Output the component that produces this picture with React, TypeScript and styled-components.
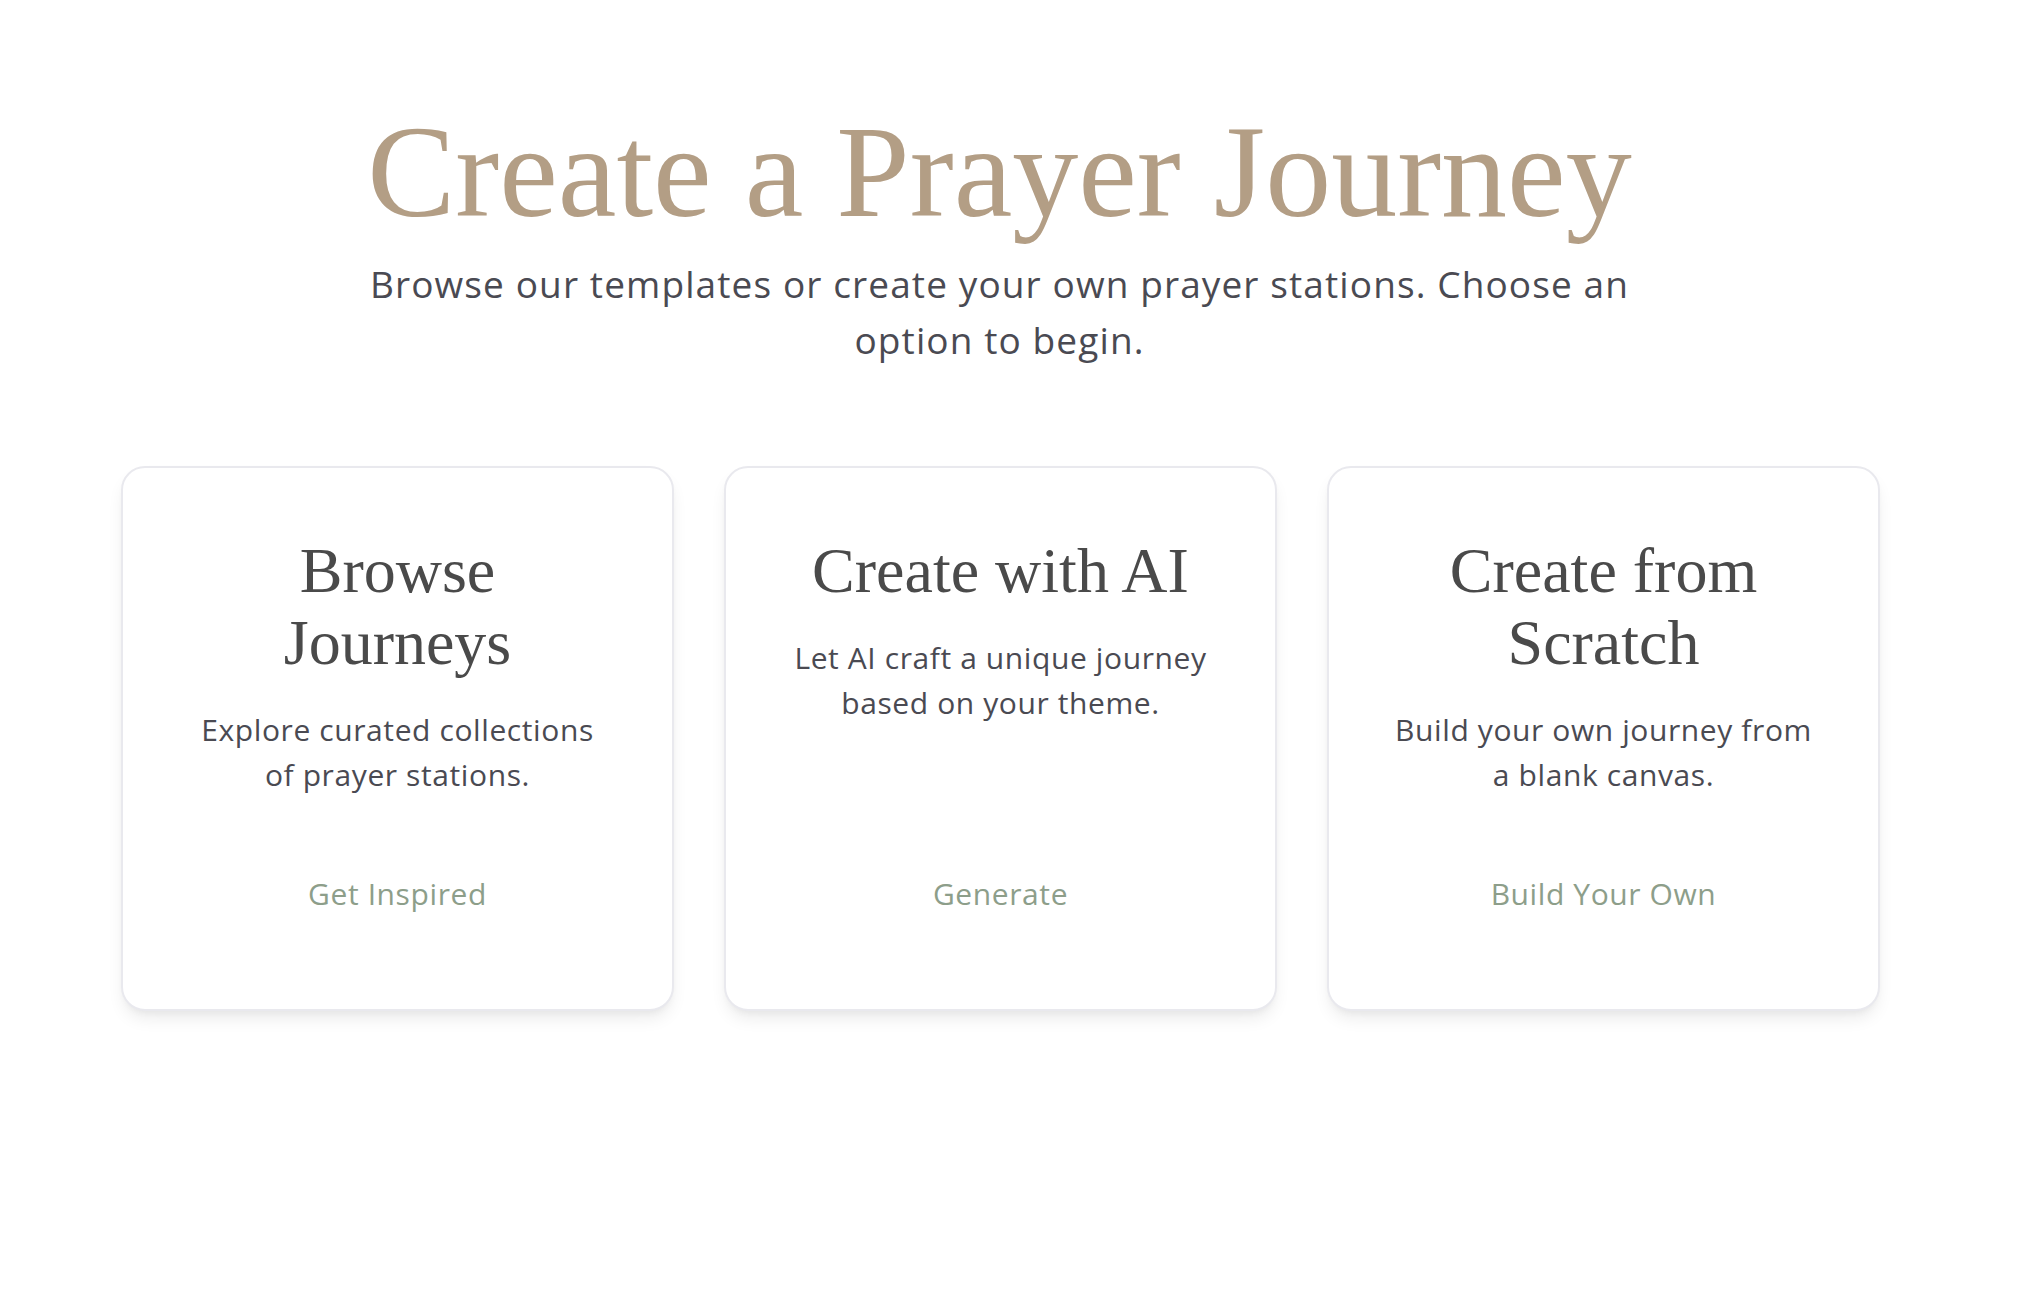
import styled, { createGlobalStyle } from 'styled-components';

interface OptionCardProps {
  id: string;
  title: string;
  description: string;
  action: string;
}

const OPTIONS: Array<OptionCardProps> = [
  {
    id: 'browse',
    title: 'Browse Journeys',
    description: 'Explore curated collections of prayer stations.',
    action: 'Get Inspired',
  },
  {
    id: 'ai',
    title: 'Create with AI',
    description: 'Let AI craft a unique journey based on your theme.',
    action: 'Generate',
  },
  {
    id: 'scratch',
    title: 'Create from Scratch',
    description: 'Build your own journey from a blank canvas.',
    action: 'Build Your Own',
  },
];

const GlobalStyle = createGlobalStyle`
  * {
    box-sizing: border-box;
  }
  body {
    margin: 0;
    background: #ffffff;
    font-family: 'Open Sans', Roboto, 'Liberation Sans', sans-serif;
    -webkit-font-smoothing: antialiased;
  }
`;

const Page = styled.main`
  min-height: 100vh;
  padding: 106px 0 120px 121px;
`;

const Content = styled.div`
  width: 1757px;
  display: flex;
  flex-direction: column;
  align-items: center;
`;

const Heading = styled.h1`
  margin: 0;
  font-family: 'Liberation Serif', 'DejaVu Serif', serif;
  font-weight: 400;
  font-size: 132px;
  line-height: 1;
  color: #b39e85;
  text-align: center;
`;

const Lead = styled.p`
  margin: 18px 0 0;
  max-width: 1300px;
  font-size: 37px;
  font-weight: 400;
  letter-spacing: 0.03em;
  line-height: 56px;
  color: #4a4a52;
  text-align: center;
`;

const CardGrid = styled.div`
  width: 100%;
  margin-top: 98px;
  display: grid;
  grid-template-columns: repeat(3, 553px);
  column-gap: 50px;
`;

const Card = styled.article`
  display: flex;
  flex-direction: column;
  align-items: center;
  padding: 67px 56px 77px;
  background: #ffffff;
  border: 2px solid #e9e9ee;
  border-radius: 24px;
  box-shadow: 0 10px 18px -4px rgba(0, 0, 0, 0.09), 0 4px 8px -4px rgba(0, 0, 0, 0.06);
  text-align: center;
`;

const CardTitle = styled.h2`
  margin: 0;
  max-width: 380px;
  font-family: 'Liberation Serif', 'DejaVu Serif', serif;
  font-weight: 400;
  font-size: 64px;
  line-height: 72px;
  color: #4a4a4a;
`;

const CardText = styled.p`
  margin: 28px 0 0;
  max-width: 426px;
  font-size: 30px;
  font-weight: 400;
  letter-spacing: 0.02em;
  line-height: 45px;
  color: #4a4a52;
`;

const CardFooter = styled.div`
  margin-top: auto;
  padding-top: 58px;
`;

const ActionButton = styled.button`
  padding: 16px 32px;
  border: none;
  background: transparent;
  font-family: inherit;
  font-size: 30px;
  font-weight: 400;
  letter-spacing: 0.02em;
  line-height: 45px;
  color: #8d9e8a;
  cursor: pointer;

  &:hover {
    color: #6f8470;
  }
`;

function OptionCard({ title, description, action }: OptionCardProps) {
  return (
    <Card>
      <CardTitle>{title}</CardTitle>
      <CardText>{description}</CardText>
      <CardFooter>
        <ActionButton type="button">{action}</ActionButton>
      </CardFooter>
    </Card>
  );
}

export default function App() {
  return (
    <>
      <GlobalStyle />
      <Page>
        <Content>
          <Heading>Create a Prayer Journey</Heading>
          <Lead>
            Browse our templates or create your own prayer stations. Choose an option to begin.
          </Lead>
          <CardGrid>
            {OPTIONS.map((option) => (
              <OptionCard key={option.id} {...option} />
            ))}
          </CardGrid>
        </Content>
      </Page>
    </>
  );
}
